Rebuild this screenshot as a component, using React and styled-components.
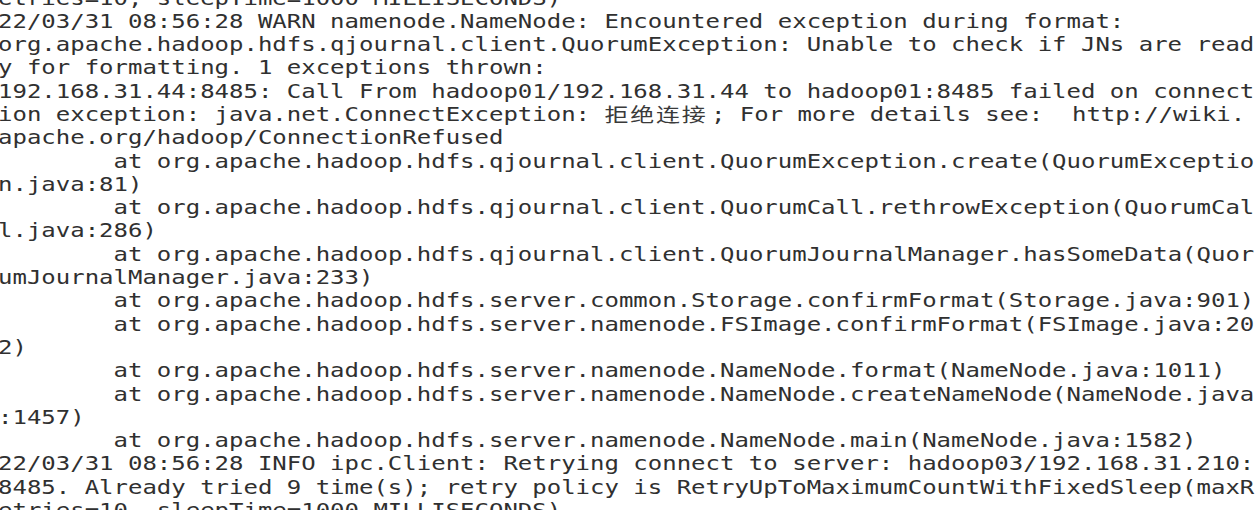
import React from 'react';
import styled, { createGlobalStyle } from 'styled-components';

const GlobalStyle = createGlobalStyle`
  html, body {
    margin: 0;
    padding: 0;
    background: #fff;
  }
`;

const Screen = styled.div`
  width: 1257px;
  height: 510px;
  overflow: hidden;
  background: #fff;
`;

const Terminal = styled.div`
  margin: -13.5px 0 0 -2.5px;
  width: 1010px;
  font-family: "DejaVu Sans Mono", "Liberation Mono", monospace;
  font-size: 19.2px;
  line-height: 23.3px;
  color: #303030;
  white-space: pre;
  tab-size: 8;
  transform: scaleX(1.25);
  transform-origin: 0 0;
`;

const Line = styled.div`
  height: 23.3px;
`;

const Cjk = styled.span`
  display: inline-block;
  width: ${(p) => p.cols}ch;
  font-family: "Noto Sans CJK SC", sans-serif;
  letter-spacing: 1.4px;
  color: #3a3a3a;
  vertical-align: top;
`;

const lines = [
  'etries=10, sleepTime=1000 MILLISECONDS)',
  '22/03/31 08:56:28 WARN namenode.NameNode: Encountered exception during format:',
  'org.apache.hadoop.hdfs.qjournal.client.QuorumException: Unable to check if JNs are read',
  'y for formatting. 1 exceptions thrown:',
  '192.168.31.44:8485: Call From hadoop01/192.168.31.44 to hadoop01:8485 failed on connect',
  'ion exception: java.net.ConnectException: 拒绝连接; For more details see:  http://wiki.',
  'apache.org/hadoop/ConnectionRefused',
  '\tat org.apache.hadoop.hdfs.qjournal.client.QuorumException.create(QuorumExceptio',
  'n.java:81)',
  '\tat org.apache.hadoop.hdfs.qjournal.client.QuorumCall.rethrowException(QuorumCal',
  'l.java:286)',
  '\tat org.apache.hadoop.hdfs.qjournal.client.QuorumJournalManager.hasSomeData(Quor',
  'umJournalManager.java:233)',
  '\tat org.apache.hadoop.hdfs.server.common.Storage.confirmFormat(Storage.java:901)',
  '\tat org.apache.hadoop.hdfs.server.namenode.FSImage.confirmFormat(FSImage.java:20',
  '2)',
  '\tat org.apache.hadoop.hdfs.server.namenode.NameNode.format(NameNode.java:1011)',
  '\tat org.apache.hadoop.hdfs.server.namenode.NameNode.createNameNode(NameNode.java',
  ':1457)',
  '\tat org.apache.hadoop.hdfs.server.namenode.NameNode.main(NameNode.java:1582)',
  '22/03/31 08:56:28 INFO ipc.Client: Retrying connect to server: hadoop03/192.168.31.210:',
  '8485. Already tried 9 time(s); retry policy is RetryUpToMaximumCountWithFixedSleep(maxR',
  'etries=10, sleepTime=1000 MILLISECONDS)',
];

// wide chars take two terminal cells
function renderLine(text) {
  return text.split(/([\u4e00-\u9fff]+)/).map((part, i) =>
    /[\u4e00-\u9fff]/.test(part) ? (
      <Cjk key={i} cols={part.length * 2}>
        {part}
      </Cjk>
    ) : (
      part
    )
  );
}

export default function App() {
  return (
    <Screen>
      <GlobalStyle />
      <Terminal>
        {lines.map((l, i) => (
          <Line key={i}>{renderLine(l)}</Line>
        ))}
      </Terminal>
    </Screen>
  );
}
